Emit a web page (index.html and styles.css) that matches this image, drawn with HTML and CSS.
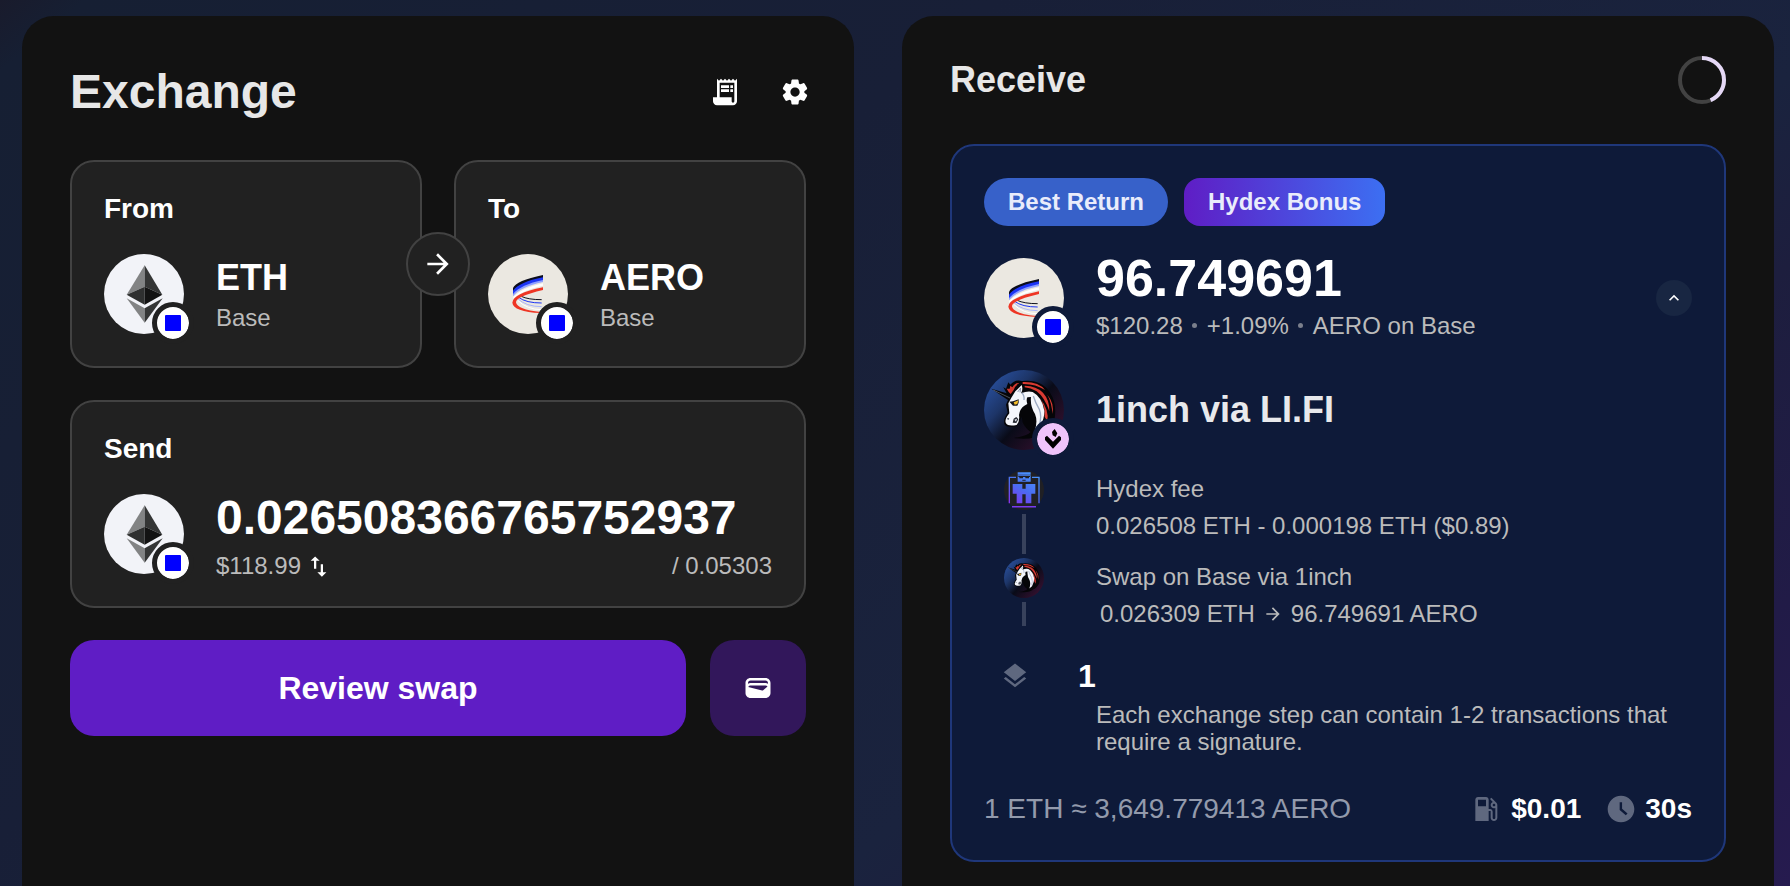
FILE: index.html
```html
<!DOCTYPE html>
<html lang="en">
<head>
<meta charset="utf-8">
<title>Exchange</title>
<link rel="stylesheet" href="styles.css">
</head>
<body>
<svg class="defs" aria-hidden="true">
  <defs>
    <linearGradient id="night" x1="0" y1="0.1" x2="1" y2="1">
      <stop offset="0" stop-color="#2b55a8"/><stop offset=".3" stop-color="#1d3568"/><stop offset=".52" stop-color="#090b18"/><stop offset=".8" stop-color="#2a0f2a"/><stop offset="1" stop-color="#4a1030"/>
    </linearGradient>
    <linearGradient id="robot" gradientUnits="userSpaceOnUse" x1="290" y1="370" x2="225" y2="475">
      <stop offset="0" stop-color="#4a9bff"/><stop offset=".5" stop-color="#4a6cf0"/><stop offset="1" stop-color="#8a2cf0"/>
    </linearGradient>
    <symbol id="eth" viewBox="312 762 240 240">
      <circle cx="432" cy="882" r="120" fill="#f2f3f8"/>
      <path d="M434 796 380 884 434 860z" fill="#828384"/>
      <path d="M434 796 487 884 434 860z" fill="#343535"/>
      <path d="M380 884 434 860V914z" fill="#2f3030"/>
      <path d="M487 884 434 860V914z" fill="#131313"/>
      <path d="M380 895 434 925V968z" fill="#828384"/>
      <path d="M488 895 434 925V968z" fill="#343535"/>
    </symbol>
    <symbol id="aero" viewBox="282 774 240 240">
      <circle cx="402" cy="894" r="120" fill="#ebe8e1"/>
      <path d="M447 858Q380 872 357 901V885Q375 862 447 849z" fill="#8fa0ff"/>
      <path d="M447 852Q380 866 357 894V878Q375 856 447 841z" fill="#1c35f5"/>
      <path d="M447 837Q366 854 357 876V884Q376 858 447 844z" fill="#0b0d1c"/>
      <path d="M447 862Q385 876 358 902V908Q385 882 447 869z" fill="#fff"/>
      <g fill="none">
        <path d="M382 901Q402 911 443 911" stroke="#10121c" stroke-width="3"/>
        <path d="M374 904Q396 921 443 921" stroke="#1c35f5" stroke-width="3"/>
        <path d="M370 907Q396 932 443 932" stroke="#a9b5fa" stroke-width="3"/>
        <path d="M372 914Q400 941 443 941" stroke="#fff" stroke-width="3"/>
      </g>
      <path d="M447 874Q356 893 355 920Q358 947 440 951V948Q369 941 366 919Q366 901 447 882z" fill="#ee3524"/>
    </symbol>
    <symbol id="unicorn" viewBox="132 60 240 240">
      <circle cx="252" cy="180" r="120" fill="url(#night)"/>
      <path d="M154 116 200 130 190 112 198 116 205 97 211 104Q226 87 246 93Q304 86 330 128Q352 160 343 212Q330 240 309 248Q282 272 222 264Q262 258 272 246Q244 226 246 200L238 216 230 228Q200 236 193 222Q189 208 203 188L198 164 204 150 186 138z" fill="#050508"/>
      <path d="M206 126 200 116 209 116 211 107 217 112Q226 97 238 99Q224 108 221 120L212 132z" fill="#cf3830"/>
      <path d="M248 96Q296 94 315 120Q286 101 248 102zM254 107Q290 108 309 128Q330 152 328 184Q314 142 290 124Q272 114 254 112zM322 134Q344 160 337 192Q336 160 322 134zM300 144Q328 180 322 214L314 200Q316 168 300 144z" fill="#d83a32"/>
      <path d="M226 124 245 105Q250 119 243 130Q262 122 278 126Q307 142 313 182Q314 205 300 230L284 243Q294 214 285 192Q270 168 273 141L262 142Q258 150 262 162L252 168Q240 176 237 195Q240 214 230 225Q204 230 198 220Q192 210 208 190L205 160 214 143z" fill="#f4f6fb"/>
      <path d="M245 128Q254 136 252 150M280 138Q286 158 298 178Q306 200 298 224" fill="none" stroke="#9eabc4" stroke-width="4"/>
      <path d="M233 126 242 114 240 127" fill="none" stroke="#8793aa" stroke-width="3"/>
      <path d="M208 155 219 154 236 148 236 158 232 167 219 167z" fill="#15161c"/>
      <path d="M221 157 235 151 232 162 224 164z" fill="#f5bd27"/>
      <path d="M229 201 235 208 229 219 218 218 221 206z" fill="#24272f"/>
      <path d="M223 209 231 206 228 215z" fill="#e9ecf4"/>
      <path d="M202 206 207 207" stroke="#3c4350" stroke-width="4"/>
      <path d="M160 120 210 144" stroke="#6d7580" stroke-width="2"/>
    </symbol>
    <symbol id="hydex" viewBox="192 360 120 120">
      <circle cx="252" cy="420" r="60" fill="#202024"/>
      <path d="M233 367H272V374H233zM233 376H272V395H233z" fill="url(#robot)"/>
      <path d="M235 378H270V381H267V385H256V381H249V385H238V381H235zM247 389H257V392H247z" fill="#202024"/>
      <path d="M218 402H247V416H257V402H286V431H274V460H257V433H247V460H230V431H218z" fill="url(#robot)"/>
      <path d="M228 382H208V460M276 382H297V460M216 470H288" fill="none" stroke="url(#robot)" stroke-width="4"/>
      <path d="M216 470H288" stroke="#7a3af0" stroke-width="4"/>
    </symbol>
  </defs>
</svg>
<main class="layout">
  <section class="panel exchange">
    <header class="exchange-head">
      <h1>Exchange</h1>
      <div class="tools">
        <svg class="i32" viewBox="0 0 24 24"><path d="M19.5 3.5 18 2l-1.5 1.5L15 2l-1.5 1.5L12 2l-1.5 1.5L9 2 7.5 3.5 6 2v14H3v3c0 1.66 1.34 3 3 3h12c1.66 0 3-1.34 3-3V2zM19 19c0 .55-.45 1-1 1s-1-.45-1-1v-3H8V5h11z"/><path d="M9 7h6v2H9zm7 0h2v2h-2zm-7 3h6v2H9zm7 0h2v2h-2z"/></svg>
        <svg class="i30" viewBox="0 0 24 24"><path d="M19.5 12c0-.23-.01-.45-.03-.68l1.86-1.41c.4-.3.51-.86.26-1.3l-1.87-3.23c-.25-.44-.79-.62-1.25-.42l-2.15.91c-.37-.26-.76-.49-1.17-.68l-.29-2.31c-.06-.5-.49-.88-.99-.88h-3.73c-.51 0-.94.38-1 .88l-.29 2.31c-.41.19-.8.42-1.17.68l-2.15-.91c-.46-.2-1-.02-1.25.42L2.41 8.62c-.25.44-.14.99.26 1.3l1.86 1.41c-.02.22-.03.44-.03.67s.01.45.03.68l-1.86 1.41c-.4.3-.51.86-.26 1.3l1.87 3.23c.25.44.79.62 1.25.42l2.15-.91c.37.26.76.49 1.17.68l.29 2.31c.06.5.49.88.99.88h3.73c.5 0 .93-.38.99-.88l.29-2.31c.41-.19.8-.42 1.17-.68l2.15.91c.46.2 1 .02 1.25-.42l1.87-3.23c.25-.44.14-.99-.26-1.3l-1.86-1.41c.03-.23.04-.45.04-.68m-7.46 3.7c-2.04 0-3.7-1.66-3.7-3.7s1.66-3.7 3.7-3.7 3.7 1.66 3.7 3.7-1.66 3.7-3.7 3.7"/></svg>
      </div>
    </header>
    <div class="pair">
      <div class="card">
        <h2>From</h2>
        <div class="token">
          <div class="avatar"><svg><use href="#eth"/></svg><span class="badge"><i></i></span></div>
          <div class="token-text"><div class="symbol">ETH</div><div class="muted">Base</div></div>
        </div>
      </div>
      <div class="card">
        <h2>To</h2>
        <div class="token">
          <div class="avatar"><svg><use href="#aero"/></svg><span class="badge"><i></i></span></div>
          <div class="token-text"><div class="symbol">AERO</div><div class="muted">Base</div></div>
        </div>
      </div>
      <div class="switch"><svg class="i32" viewBox="0 0 24 24"><path d="m12 4-1.41 1.41L16.17 11H4v2h12.17l-5.58 5.59L12 20l8-8z"/></svg></div>
    </div>
    <div class="card send">
      <h2>Send</h2>
      <div class="token">
        <div class="avatar"><svg><use href="#eth"/></svg><span class="badge"><i></i></span></div>
        <div class="amount">
          <div class="amount-value">0.026508366765752937</div>
          <div class="amount-sub muted">
            <span>$118.99</span>
            <svg class="swapvert" viewBox="0 0 24 24"><path d="M16 17.01V10h-2v7.01h-3L15 21l4-3.99zM9 3 5 6.99h3V14h2V6.99h3z"/></svg>
            <span class="balance">/ 0.05303</span>
          </div>
        </div>
      </div>
    </div>
    <div class="actions">
      <div class="review">Review swap</div>
      <div class="wallet"><svg class="i30" viewBox="0 0 24 24"><path d="M18 4H6C3.79 4 2 5.79 2 8v8c0 2.21 1.79 4 4 4h12c2.21 0 4-1.79 4-4V8c0-2.21-1.79-4-4-4m-1.86 9.77c-.24.2-.57.28-.88.2L4.15 11.25C4.45 10.52 5.16 10 6 10h12c.67 0 1.26.34 1.63.84zM6 6h12c1.1 0 2 .9 2 2v.55c-.59-.34-1.27-.55-2-.55H6c-.73 0-1.41.21-2 .55V8c0-1.1.9-2 2-2"/></svg></div>
    </div>
  </section>

  <section class="panel receive">
    <header class="receive-head">
      <h2 class="receive-title">Receive</h2>
      <svg class="timer" viewBox="0 0 48 48"><circle cx="24" cy="24" r="22" stroke="#424242"/><circle cx="24" cy="24" r="22" stroke="#e5d8f6" pathLength="100" stroke-dasharray="43.6 100" transform="rotate(-90 24 24)"/></svg>
    </header>
    <article class="route">
      <div class="chips"><span class="chip best">Best Return</span><span class="chip bonus">Hydex Bonus</span></div>
      <div class="token result">
        <div class="avatar"><svg><use href="#aero"/></svg><span class="badge"><i></i></span></div>
        <div class="result-text">
          <div class="result-value">96.749691</div>
          <div class="result-sub muted"><span>$120.28</span><i class="dot"></i><span>+1.09%</span><i class="dot"></i><span>AERO on Base</span></div>
        </div>
        <div class="collapse"><svg viewBox="0 0 24 24"><path d="m12 8-6 6 1.41 1.41L12 10.83l4.59 4.58L18 14z"/></svg></div>
      </div>
      <div class="token provider">
        <div class="avatar"><svg><use href="#unicorn"/></svg><span class="badge lifi"><svg viewBox="291 219 96 96"><path d="M315 262 321 257 339 275 357 257 363 262V270L339 296 315 270zM336 246 344 237 352 250 347 261 338 256z"/></svg></span></div>
        <div class="provider-name">1inch via LI.FI</div>
      </div>
      <div class="step">
        <div class="rail"><svg><use href="#hydex"/></svg><i></i></div>
        <div class="step-text muted"><div>Hydex fee</div><div>0.026508 ETH - 0.000198 ETH ($0.89)</div></div>
      </div>
      <div class="step last">
        <div class="rail"><svg><use href="#unicorn"/></svg><i></i></div>
        <div class="step-text muted"><div>Swap on Base via 1inch</div><div class="conversion"><span>0.026309 ETH</span><svg viewBox="0 0 24 24"><path d="m12 4-1.41 1.41L16.17 11H4v2h12.17l-5.58 5.59L12 20l8-8z"/></svg><span>96.749691 AERO</span></div></div>
      </div>
      <div class="count">
        <svg class="i30" viewBox="0 0 24 24"><path d="m11.99 18.54-7.37-5.73L3 14.07l9 7 9-7-1.63-1.27zM12 16l7.36-5.73L21 9l-9-7-9 7 1.63 1.27z"/></svg>
        <b>1</b>
      </div>
      <p class="note muted">Each exchange step can contain 1-2 transactions that require a signature.</p>
      <footer class="foot">
        <span class="rate">1 ETH ≈ 3,649.779413 AERO</span>
        <svg class="i32 fuel" viewBox="0 0 24 24"><path d="m19.77 7.23.01-.01-3.72-3.72L15 4.56l2.11 2.11c-.94.36-1.61 1.26-1.61 2.33 0 1.38 1.12 2.5 2.5 2.5.36 0 .69-.08 1-.21v7.21c0 .55-.45 1-1 1s-1-.45-1-1V14c0-1.1-.9-2-2-2h-1V5c0-1.1-.9-2-2-2H6c-1.1 0-2 .9-2 2v16h10v-7.5h1.5v5c0 1.38 1.12 2.5 2.5 2.5s2.5-1.12 2.5-2.5V9c0-.69-.28-1.32-.73-1.77M12 10H6V5h6zm6 0c-.55 0-1-.45-1-1s.45-1 1-1 1 .45 1 1-.45 1-1 1"/></svg>
        <b>$0.01</b>
        <svg class="i32 clock" viewBox="0 0 24 24"><path d="M12 2C6.5 2 2 6.5 2 12s4.5 10 10 10 10-4.5 10-10S17.5 2 12 2m3.6 14.6L11 12.7V7h1.8v4.9l4.1 3.4z"/></svg>
        <b>30s</b>
      </footer>
    </article>
  </section>
</main>
</body>
</html>
```
FILE: styles.css
```css
* { box-sizing: border-box; margin: 0; padding: 0; }
body {
  height: 886px;
  overflow: hidden;
  background: linear-gradient(140deg, #191b2c 0, #161f33 3%, #181f37 35%, #1a233e 66%, #1d1e3e 74%, #211b47 88%, #261b4f 100%);
  color: #fff;
  font-family: "Liberation Sans", Arial, Helvetica, sans-serif;
  font-size: 24px;
}
svg { display: block; fill: currentColor; flex: none; }
.defs { position: absolute; width: 0; height: 0; }
.i30 { width: 30px; height: 30px; }
.i32 { width: 32px; height: 32px; }
.muted { color: #bbb; }

.layout { display: grid; grid-template-columns: 832px 872px; gap: 48px; padding: 16px 16px 0 22px; height: 886px; }
.panel { height: 870px; background: #121212; border-radius: 32px 32px 0 0; padding: 48px 48px 0; }
.receive { padding-top: 40px; }

.exchange-head { display: flex; align-items: center; justify-content: space-between; height: 56px; margin-bottom: 40px; }
h1 { font-size: 48px; line-height: 56px; color: #e7e7e7; }
.tools { display: flex; align-items: center; gap: 39px; margin-right: -4px; }

.pair { position: relative; display: grid; grid-template-columns: 1fr 1fr; gap: 32px; margin-bottom: 32px; }
.card { height: 208px; background: #212121; border: 2px solid #424242; border-radius: 24px; padding: 31px 32px 0; --surface: #212121; }
.card h2 { font-size: 28px; line-height: 32px; margin-bottom: 29px; }
.token { display: flex; align-items: flex-start; gap: 32px; }
.avatar { position: relative; width: 80px; height: 80px; flex: none; }
.avatar > svg { width: 80px; height: 80px; }
.badge { position: absolute; left: 48px; top: 48px; width: 42px; height: 42px; border-radius: 50%; border: 5px solid var(--surface); background: #fff; background-clip: padding-box; display: grid; place-items: center; }
.badge i { width: 16px; height: 16px; background: #00f; border-radius: 1px; }
.token-text { padding-top: 2px; }
.symbol { font-size: 36px; line-height: 44px; font-weight: bold; }
.token-text .muted { line-height: 36px; }
.switch { position: absolute; left: 336px; top: 72px; width: 64px; height: 64px; border: 2px solid #424242; border-radius: 50%; background: #212121; display: grid; place-items: center; }
.send { margin-bottom: 32px; }
.amount { flex: 1; }
.amount-value { font-size: 48px; line-height: 48px; font-weight: bold; margin-bottom: 6px; }
.amount-sub { display: flex; align-items: center; line-height: 36px; }
.swapvert { width: 27px; height: 27px; margin-left: 4px; color: #fff; }
.balance { margin-left: auto; }

.actions { display: flex; gap: 24px; }
.review { flex: 1; height: 96px; line-height: 96px; border-radius: 24px; background: #5f1dc5; text-align: center; font-size: 32px; font-weight: bold; }
.wallet { width: 96px; height: 96px; border-radius: 24px; background: #32175b; display: grid; place-items: center; }

.receive-head { display: flex; justify-content: space-between; align-items: center; height: 48px; margin-bottom: 40px; }
.receive-title { font-size: 36px; line-height: 48px; color: #e7e7e7; }
.timer { width: 48px; height: 48px; fill: none; stroke-width: 4; }
.route { height: 718px; background: #0e1a39; border: 2px solid #1f377a; border-radius: 24px; padding: 32px; --surface: #0e1a39; }
.chips { display: flex; gap: 16px; margin-bottom: 32px; }
.chip { height: 48px; line-height: 48px; padding: 0 24px; font-weight: bold; color: #e9ecfb; }
.best { border-radius: 24px; background: #3761c9; }
.bonus { border-radius: 16px; background: linear-gradient(90deg, #5f1dc5, #3c6ff2); }
.result { margin-bottom: 32px; }
.result-text { flex: 1; height: 80px; margin-top: -8px; }
.result-value { font-size: 52px; line-height: 56px; font-weight: bold; margin-bottom: 4px; }
.result-sub { display: flex; align-items: center; line-height: 32px; }
.dot { width: 5px; height: 5px; margin: -2px 9.5px 0; border-radius: 50%; background: #7a7f8c; }
.collapse { width: 36px; height: 36px; margin-top: 22px; border-radius: 50%; background: #182642; display: grid; place-items: center; }
.collapse svg { width: 20px; height: 20px; }
.provider { margin-bottom: 20px; }
.provider-name { font-size: 36px; line-height: 80px; font-weight: bold; color: #e8e9ec; }
.lifi { background: #efc3fa; background-clip: padding-box; }
.lifi svg { width: 32px; height: 32px; color: #000; }

.step { display: flex; gap: 32px; height: 88px; }
.rail { width: 80px; display: flex; flex-direction: column; align-items: center; gap: 4px; }
.rail svg { width: 40px; height: 40px; }
.rail i { width: 4px; height: 40px; background: #38425c; }
.last .rail i { height: 24px; }
.step-text { line-height: 37px; }
.conversion { display: flex; align-items: center; padding-left: 4px; }
.conversion svg { width: 20px; height: 20px; margin: 0 8px; }
.count { display: flex; align-items: center; gap: 48px; height: 32px; margin: 14px 0 9px 16px; }
.count svg { color: #5f687f; }
.count b { font-size: 32px; line-height: 32px; }
.note { padding-left: 112px; line-height: 27px; margin-bottom: 34px; }
.foot { display: flex; align-items: center; height: 40px; font-size: 28px; line-height: 40px; }
.foot svg { color: #5f687f; }
.rate { margin-right: auto; color: #939aac; }
.fuel { margin-right: 9px; }
.clock { margin: 0 8px 0 24px; }
```
